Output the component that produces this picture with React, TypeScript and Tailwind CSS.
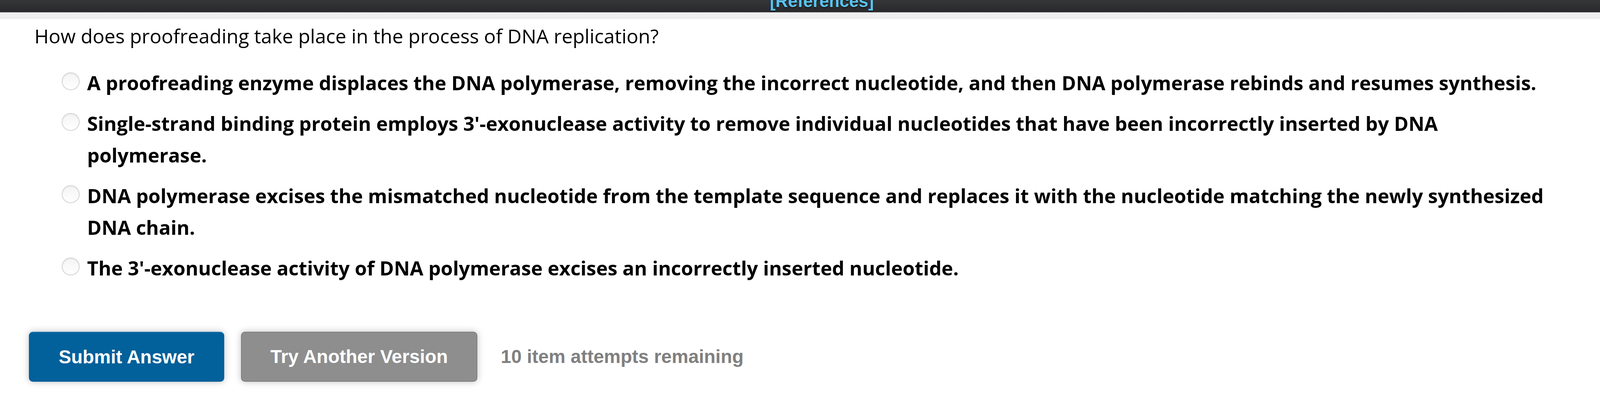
const options = [
  'A proofreading enzyme displaces the DNA polymerase, removing the incorrect nucleotide, and then DNA polymerase rebinds and resumes synthesis.',
  "Single-strand binding protein employs 3'-exonuclease activity to remove individual nucleotides that have been incorrectly inserted by DNA polymerase.",
  'DNA polymerase excises the mismatched nucleotide from the template sequence and replaces it with the nucleotide matching the newly synthesized DNA chain.',
  "The 3'-exonuclease activity of DNA polymerase excises an incorrectly inserted nucleotide.",
]

const Radio = () => (
  <span className="mt-[13px] h-[46px] w-[46px] shrink-0 rounded-full border-2 border-[#d4d4d4] bg-gradient-to-b from-[#f4f4f4] to-white shadow-[inset_0_2px_3px_rgba(0,0,0,0.06)]" />
)

export default function App() {
  return (
    <div className="min-h-[1057px] w-full bg-white">
      {/* top toolbar, the references link is cut by the frame */}
      <div className="flex h-[31px] justify-center overflow-hidden bg-gradient-to-b from-[#353638] to-[#29292b] pl-[112px]">
        <span className="mt-[-23px] font-['Liberation_Sans',Arial,sans-serif] text-[44px] leading-[52px] font-bold text-[#5ac3ee] [text-shadow:0_2px_3px_rgba(0,0,0,0.7)]">
          [References]
        </span>
      </div>
      <div className="h-px bg-[#8a8a8a]" />
      <div className="h-[16px] border-b border-[#e6e6e6] bg-[#efefef]" />

      <div className="px-[88px] pt-[4px]">
        <p className="font-['Open_Sans',sans-serif] text-[50px] leading-[81px] text-black">
          How does proofreading take place in the process of DNA replication?
        </p>

        <ul className="mt-[39px] flex flex-col gap-[23px] pl-[70px] pr-[10px]">
          {options.map((text) => (
            <li key={text} className="flex items-start gap-[19px]">
              <Radio />
              <span className="font-['Open_Sans',sans-serif] text-[50px] leading-[81px] font-bold text-black">
                {text}
              </span>
            </li>
          ))}
        </ul>

        <div className="mt-[122px] flex items-center font-['Liberation_Sans',Arial,sans-serif] text-[48px] font-bold">
          <button className="-ml-[14px] h-[128px] w-[500px] rounded-[10px] border-t-2 border-[#2a7bb0] bg-[#02609a] text-white shadow-[0_0_18px_rgba(0,0,0,0.25)]">
            Submit Answer
          </button>
          <button className="ml-[43px] h-[128px] w-[605px] rounded-[10px] border-2 border-[#7f7f7f] bg-[#8e8e8e] text-white shadow-[0_0_18px_rgba(0,0,0,0.25)]">
            Try Another Version
          </button>
          <span className="ml-[60px] text-[#808080]">10 item attempts remaining</span>
        </div>
      </div>
    </div>
  )
}
